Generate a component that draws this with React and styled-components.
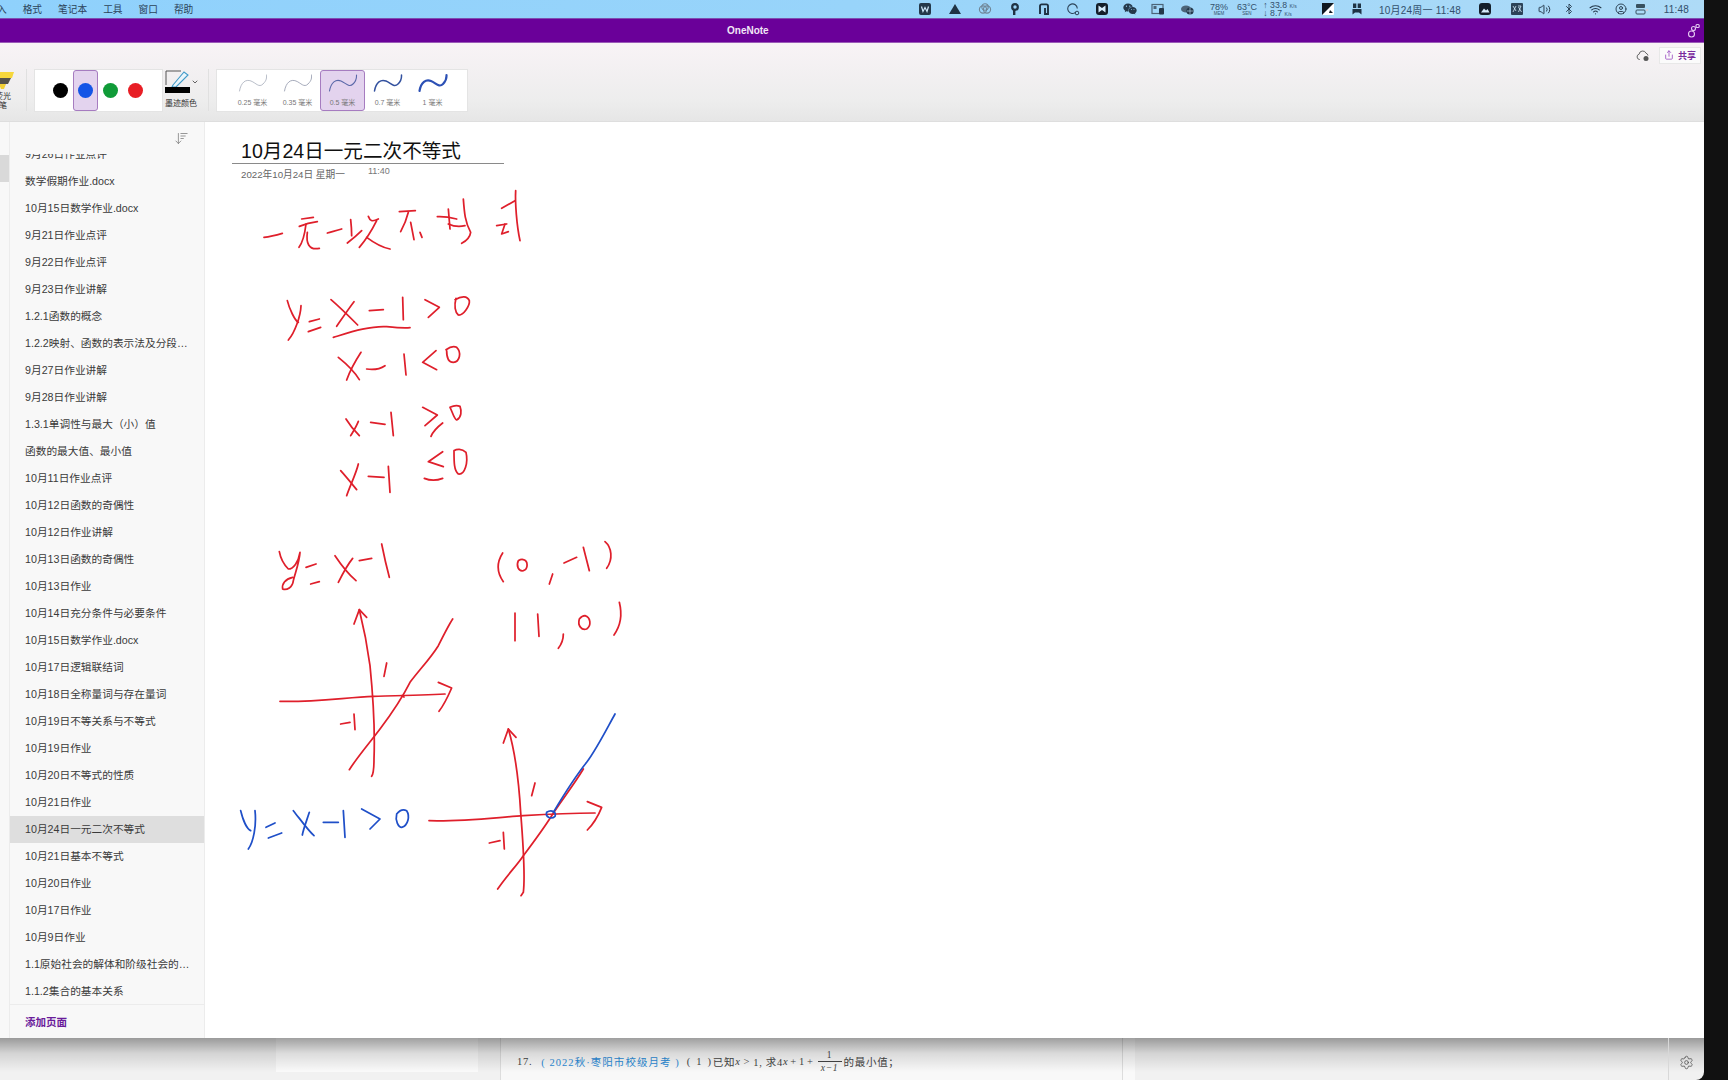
import React from "react";
import styled, { createGlobalStyle } from "styled-components";
import { Volume2, Bluetooth, Wifi, CircleUser, Settings, ArrowDownWideNarrow, Share, ChevronDown } from "lucide-react";
import { FaWeixin } from "react-icons/fa";

const Global = createGlobalStyle`
  html, body { margin: 0; padding: 0; background: #111; }
  * { box-sizing: border-box; }
  body { font-family: "Liberation Sans", "Noto Sans CJK SC", sans-serif; }
`;

const Stage = styled.div`
  width: 1728px; height: 1080px; background: #111; overflow: hidden;
`;
const Screen = styled.div`
  width: 1704px; height: 1080px; display: flex; flex-direction: column;
  border-bottom-right-radius: 8px; overflow: hidden;
`;
const MenuBar = styled.header`
  height: 19px; flex: none; display: flex; align-items: center;
  background: linear-gradient(90deg, #8fd1fc 0%, #98d4fa 50%, #aedbf7 100%);
  border-bottom: 1px solid #7d4fb0;
  color: #2c4358; font-size: 9.7px;
`;
const MenuList = styled.nav`
  display: flex; gap: 16px; margin-left: -3px;
`;
const MenuItem = styled.span`
  white-space: nowrap;
`;
const Status = styled.div`
  margin-left: auto; display: flex; align-items: center; height: 18px;
`;
const Slot = styled.div`
  width: ${p => p.$w}px; margin-left: ${p => p.$ml || 0}px; flex: none;
  display: flex; justify-content: center; align-items: center; color: #24384a;
`;
const Clock = styled.span`
  font-size: 10px; color: #33506b; white-space: nowrap; letter-spacing: .2px;
`;
const Meter = styled.div`
  display: flex; flex-direction: column; align-items: center; line-height: 8px;
  font-size: 9px; color: #33506b;
  small { font-size: 4.5px; line-height: 5px; }
`;
const Net = styled.div`
  display: flex; flex-direction: column; gap: 0; padding-top: 2px; font-size: 8.7px; line-height: 7.5px; color: #33506b; white-space: nowrap;
  small { font-size: 5px; }
`;
const TitleBar = styled.div`
  height: 24px; flex: none; display: flex; align-items: center; justify-content: space-between;
  background: #6a0099; border-bottom: 1px solid #9a5ab8;
  color: #f1e6f6; font-size: 10px; font-weight: 700; padding: 0 4px 0 727px;
`;
const Ribbon = styled.div`
  height: 79px; flex: none; display: flex;
  background: linear-gradient(#f8f3f6, #ededed 75%, #e6e6e6);
  border-bottom: 1px solid #dedede;
`;
const Tools = styled.div`
  display: flex; margin-top: 26px; height: 44px; align-items: flex-start;
`;
const Highlighter = styled.div`
  width: 24px; margin-left: -9px; margin-top: 2px; display: flex; flex-direction: column; align-items: center;
  font-size: 8px; line-height: 9px; color: #333; text-align: center;
  svg { margin-bottom: 3px; }
`;
const Divider = styled.div`
  width: 1px; height: 42px; flex: none; margin: 0 7px 0 ${p => p.$left}px; background: #e0e0e0;
`;
const Panel = styled.div`
  height: 43px; background: #fff; border: 1px solid #e4e4e4; display: flex; padding-left: ${p => p.$pad}px; width: ${p => p.$w}px; flex: none;
`;
const Swatch = styled.div`
  width: 25px; height: 41px; display: flex; align-items: center; justify-content: center; border-radius: 3px;
  ${p => p.$on && "background: #e3d3ee; border: 1px solid #a67cc0;"}
`;
const Dot = styled.div`
  width: 15px; height: 15px; border-radius: 50%; background: ${p => p.$c};
`;
const InkColor = styled.div`
  width: 34px; margin-left: 2px; display: flex; flex-direction: column; align-items: flex-start; position: relative;
  font-size: 8px; color: #333; white-space: nowrap;
  svg.chev { position: absolute; right: 0; top: 9px; }
`;
const InkBar = styled.div`
  width: 25px; height: 6px; background: #000; margin-bottom: 4px;
`;
const PenItem = styled.div`
  width: 45px; height: 41px; display: flex; flex-direction: column; align-items: center; border-radius: 3px; padding-top: 3px;
  font-size: 7px; color: #777; white-space: nowrap;
  svg { margin-bottom: 4px; }
  ${p => p.$on && "background: #e3d3ee; border: 1px solid #a67cc0; padding-top: 2px;"}
`;
const RibbonRight = styled.div`
  margin-left: auto; margin-top: 4px; margin-right: 3px; height: 16px; display: flex; align-items: center; gap: 9px;
`;
const ShareButton = styled.div`
  width: 42px; height: 17px; background: #fbfbfb; border: 1px solid #e8e8e8; display: flex; align-items: center; justify-content: center; gap: 4px;
  color: #7a2a9e; font-size: 9px; font-weight: 700;
`;
const Body = styled.div`
  height: 916px; flex: none; display: flex; background: #fff;
`;
const Sidebar = styled.aside`
  width: 205px; flex: none; display: flex; background: #f8f8f8; border-right: 1px solid #ececec;
`;
const ScrollRail = styled.div`
  width: 10px; flex: none; padding-top: 33px; border-right: 1px solid #ececec;
`;
const ScrollThumb = styled.div`
  height: 27px; background: #d9d9d9;
`;
const PageColumn = styled.div`
  flex: 1; min-width: 0; display: flex; flex-direction: column;
`;
const SortBar = styled.div`
  height: 32px; flex: none; display: flex; justify-content: flex-end; align-items: center; padding-right: 15px; color: #777;
`;
const PageList = styled.div`
  flex: 1; overflow: hidden; min-height: 0;
`;
const PageRows = styled.div`
  margin-top: -13px;
`;
const PageRow = styled.div`
  height: 27px; line-height: 27px; padding: 0 12px 0 15px; font-size: 10.7px; color: #3a3a3a;
  white-space: nowrap; overflow: hidden; text-overflow: ellipsis;
  ${p => p.$on && "background: #dedede;"}
`;
const AddPage = styled.div`
  height: 34px; flex: none; border-top: 1px solid #ececec; padding-left: 15px; line-height: 34px;
  font-size: 10.5px; font-weight: 700; color: #6a1b9a;
`;
const Content = styled.main`
  flex: 1; position: relative; padding: 15px 0 0 27px; background: #fff;
`;
const TitleBlock = styled.div`
  width: 272px; height: 27px; border-bottom: 1px solid #8a8a8a; padding-left: 9px;
  font-size: 19.6px; line-height: 28px; color: #111; white-space: nowrap;
`;
const DateRow = styled.div`
  display: flex; padding-left: 9px; margin-top: 5px; font-size: 9.7px; line-height: 12px; color: #666;
`;
const TimeText = styled.span`
  margin-left: 23px; margin-top: -4px; font-size: 9px; color: #777;
`;
const Ink = styled.svg`
  position: absolute; left: 25px; top: 47px; width: 420px; height: 760px;
  fill: none; stroke-linecap: round; stroke-linejoin: round; stroke-width: 5.2;
`;
const Behind = styled.div`
  flex: 1; position: relative; display: flex; background: #f1f1f1;
  &::after {
    content: ""; position: absolute; left: 0; right: 0; top: 0; height: 34px;
    background: linear-gradient(rgba(0,0,0,.36), rgba(0,0,0,.12) 45%, rgba(0,0,0,0));
  }
`;
const BehindPanel = styled.div`
  width: 202px; height: 34px; margin-left: 276px; background: #fafafa;
`;
const BehindDoc = styled.div`
  width: 623px; margin-left: 22px; background: #f8f8f8; border-left: 1px solid #ddd; border-right: 1px solid #ddd;
  padding: 9px 0 0 16px; display: flex; align-items: flex-start; font-family: "Liberation Serif", "Noto Sans CJK SC", serif;
  font-size: 10.5px; color: #444; white-space: nowrap; height: 42px;
`;
const Gutter = styled.div`
  width: 12px; background: #f9f9f9;
`;
const Line = styled.span`
  display: inline-flex; align-items: center; height: 28px; letter-spacing: .7px;
`;
const Source = styled.span`
  color: #2c8bd6; margin: 0 7px 0 9px; letter-spacing: 1.05px;
`;
const Part = styled.span`
  margin-right: 1px; word-spacing: 2px;
`;
const Op = styled.span`
  margin: 0 ${p => p.$m}px;
`;
const Frac = styled.span`
  display: inline-flex; flex-direction: column; align-items: center; margin: 0 2px; font-style: italic; line-height: 12px; font-size: 9.5px;
  span { display: block; }
  span:first-child { border-bottom: 1px solid #444; padding: 0 3px; min-width: 24px; text-align: center; font-style: normal; }
`;
const GearColumn = styled.div`
  width: 36px; margin-left: auto; border-left: 1px solid #d8d8d8; display: flex; align-items: flex-end; justify-content: center; padding-bottom: 10px; color: #555; position: relative; z-index: 1;
`;

const pages = [
  "9月26日作业点评", "数学假期作业.docx", "10月15日数学作业.docx", "9月21日作业点评", "9月22日作业点评", "9月23日作业讲解",
  "1.2.1函数的概念", "1.2.2映射、函数的表示法及分段函数", "9月27日作业讲解", "9月28日作业讲解", "1.3.1单调性与最大（小）值",
  "函数的最大值、最小值", "10月11日作业点评", "10月12日函数的奇偶性", "10月12日作业讲解", "10月13日函数的奇偶性", "10月13日作业",
  "10月14日充分条件与必要条件", "10月15日数学作业.docx", "10月17日逻辑联结词", "10月18日全称量词与存在量词", "10月19日不等关系与不等式",
  "10月19日作业", "10月20日不等式的性质", "10月21日作业", "10月24日一元二次不等式", "10月21日基本不等式", "10月20日作业", "10月17日作业",
  "10月9日作业", "1.1原始社会的解体和阶级社会的演进", "1.1.2集合的基本关系",
];

const pens = [
  { label: "0.25 毫米", w: 0.7, c: "#9aa0b0" },
  { label: "0.35 毫米", w: 0.8, c: "#8f96aa" },
  { label: "0.5 毫米", w: 1.1, c: "#5a68a8", on: true },
  { label: "0.7 毫米", w: 1.5, c: "#33519f" },
  { label: "1 毫米", w: 2.2, c: "#2c50b5" },
];

const redA = [
  "M102 205C120 203 140 198 157 193", "M215 150L250 145", "M208 172C225 165 245 160 262 158", "M228 165C225 190 218 220 207 235", "M232 190C228 220 235 245 268 238",
  "M292 192C305 188 320 185 335 180", "M362 152C364 170 365 185 365 200", "M352 222C365 212 380 200 395 185", "M415 142C420 155 425 160 445 150", "M440 155C430 175 410 210 388 235", "M410 205C430 220 455 235 480 240",
  "M508 128L556 125", "M535 130C530 150 522 170 512 188", "M542 160L552 212", "M570 190L576 205",
  "M622 143C640 142 660 145 680 150", "M655 120L660 180", "M700 90C703 130 705 160 722 190C720 205 710 215 695 223", "M655 165C670 172 685 175 705 170",
  "M815 118L855 95", "M857 65C855 100 860 170 870 215", "M800 170L830 165", "M825 165L815 195L835 188",
  "M172 395C178 420 195 455 205 460", "M213 410C212 440 195 490 175 513", "M238 458L268 450", "M235 488L272 475",
  "M303 392C330 415 360 445 383 468", "M372 398C355 420 335 450 320 472", "M418 425L460 422", "M518 385L520 452", "M585 392L628 415L595 445",
  "M678 388C672 410 675 430 685 438C700 440 720 410 718 395C712 380 695 380 675 392", "M310 505C360 490 420 470 470 473C500 476 520 478 540 476",
  "M325 565C350 585 375 610 388 632", "M393 550C380 570 362 600 350 633", "M410 600C430 603 450 600 465 590", "M522 555L528 618", "M618 545L578 580L620 602",
  "M650 545C650 565 655 580 670 580C690 578 695 550 680 535C670 530 658 535 648 542",
  "M348 750C360 770 378 790 388 800", "M385 757C378 775 368 790 362 800", "M422 760L465 766", "M483 730L490 800", "M578 715L622 738L585 770", "M638 762C625 772 610 785 603 802",
  "M660 715C668 730 672 750 680 753C695 745 695 725 690 712C680 708 670 710 660 715",
  "M332 905C350 925 370 950 380 962", "M385 885C378 915 360 950 350 980", "M415 922L462 925", "M475 892L480 970", "M638 848L595 878L640 893", "M583 928C600 935 620 935 638 928",
  "M672 845C672 880 672 905 685 915C705 918 715 880 708 850C695 838 680 840 672 845",
];
const redB = [
  "M148 98C152 120 165 140 175 150C190 150 205 130 210 100C208 130 196 160 190 185C188 205 170 215 158 210C155 195 165 180 188 175", "M228 145L258 135", "M242 195L268 188",
  "M315 110C335 140 355 165 378 185", "M368 118C350 140 335 170 325 190", "M388 125L425 118", "M455 75C462 110 470 145 478 175",
  "M818 102C800 130 800 160 820 188", "M865 125C858 140 865 158 880 155C895 150 895 125 880 122C875 120 870 122 865 125", "M968 165L958 195", "M1002 132L1040 115", "M1060 85L1078 155", "M1125 68C1145 85 1150 120 1130 148",
  "M855 282L855 365", "M923 285L927 352", "M1000 345C1000 360 995 375 985 388", "M1048 300C1042 320 1055 335 1070 330C1085 320 1082 295 1065 290C1058 290 1052 295 1048 300", "M1168 250C1178 290 1172 320 1152 348",
  "M388 272C400 320 412 380 420 440C428 520 435 640 432 720C432 750 430 765 425 772", "M372 315L388 272L410 295",
  "M150 547C250 550 350 535 430 532C500 530 580 528 645 525", "M625 490L665 507C655 530 640 560 627 577",
  "M358 752C385 710 420 670 450 630C480 590 510 550 540 490C570 450 600 420 625 380C640 350 655 320 668 300",
  "M470 432L462 472", "M332 615L360 610", "M372 585L375 632", "M515 530L522 534",
  "M835 630C850 680 865 760 872 880C880 980 885 1080 880 1120L873 1130", "M820 672L835 630L858 655",
  "M597 905C700 908 800 895 880 890C960 885 1030 882 1095 882", "M1072 848L1115 865C1105 890 1090 915 1072 933",
  "M803 1110C830 1070 860 1040 880 1010C910 970 940 930 965 890C990 850 1030 800 1060 750",
  "M915 792L905 830", "M778 972L810 965", "M820 940L823 990",
];
const blueB = [
  "M970 880C1000 830 1030 780 1070 730C1100 690 1130 630 1155 585", "M950 880C945 895 965 902 975 892C980 880 965 870 950 880",
  "M32 875C38 900 50 930 62 935", "M75 875C80 920 70 970 55 990", "M108 925L135 912", "M115 957L155 942",
  "M190 875C210 900 235 935 252 950", "M238 880C230 905 220 930 217 948", "M280 910L325 910", "M340 875L345 955", "M395 870L450 900L420 930",
  "M500 885C495 905 505 925 515 925C535 920 540 890 530 875C520 870 508 875 500 885",
];

const Glyph = ({ children, w = 14, h = 14, view = "0 0 14 14" }) => (
  <svg width={w} height={h} viewBox={view}>{children}</svg>
);

export default function App() {
  return (
    <Stage>
      <Global />
      <Screen>
        <MenuBar>
          <MenuList>
            <MenuItem>入</MenuItem><MenuItem>格式</MenuItem><MenuItem>笔记本</MenuItem>
            <MenuItem>工具</MenuItem><MenuItem>窗口</MenuItem><MenuItem>帮助</MenuItem>
          </MenuList>
          <Status>
            <Slot $w={30}><Glyph><rect x="1" y="1" width="12" height="12" rx="2" fill="#24384a" /><path d="M3.5 4.5L5 9.5L7 5.5L9 9.5L10.5 4.5" fill="none" stroke="#cfe8fa" strokeWidth="1.2" /></Glyph></Slot>
            <Slot $w={30}><Glyph><path d="M7 2L13 12H1Z" fill="#1f3344" /></Glyph></Slot>
            <Slot $w={30}><Glyph><g fill="none" stroke="#6f8596" strokeWidth="1.1"><circle cx="5" cy="7.5" r="3.6" /><circle cx="9" cy="7.5" r="3.6" /><circle cx="7" cy="5" r="3.2" /></g></Glyph></Slot>
            <Slot $w={30}><Glyph><circle cx="7" cy="5" r="2.8" fill="none" stroke="#1f3344" strokeWidth="2.2" /><path d="M6.2 7.5V13" stroke="#1f3344" strokeWidth="2.4" /></Glyph></Slot>
            <Slot $w={27}><Glyph><path d="M3 12V4a1.6 1.6 0 0 1 1.6-1.6h4.8A1.6 1.6 0 0 1 11 4V12H8V6" fill="none" stroke="#1f3344" strokeWidth="1.9" /></Glyph></Slot>
            <Slot $w={31}><Glyph><path d="M9.8 10.2A4.8 4.8 0 1 1 11.3 6.5" fill="none" stroke="#2c4358" strokeWidth="1.1" /><circle cx="11" cy="11" r="1.8" fill="none" stroke="#2c4358" /></Glyph></Slot>
            <Slot $w={28}><Glyph><rect x="1" y="1" width="12" height="12" rx="3" fill="#141f2a" /><path d="M3.5 3.5L7 6L10.5 3.5V10.5L7 8L3.5 10.5Z" fill="#d6ecfb" /></Glyph></Slot>
            <Slot $w={27}><FaWeixin size={14} /></Slot>
            <Slot $w={29}><Glyph><rect x="1" y="2.5" width="11" height="9" fill="none" stroke="#4c6478" strokeWidth="1.2" /><rect x="2.5" y="4" width="3" height="3" fill="#4c6478" /><rect x="8" y="6" width="5" height="6.5" rx="1" fill="#24384a" /></Glyph></Slot>
            <Slot $w={30}><Glyph><ellipse cx="6" cy="7" rx="5" ry="3.6" fill="#4c6478" /><circle cx="10" cy="9" r="3.6" fill="#24384a" /><path d="M7 9H13M10 5.6V12.4" stroke="#bfe0f6" strokeWidth=".6" /></Glyph></Slot>
            <Slot $w={34}><Meter><span>78%</span><small>MEM</small></Meter></Slot>
            <Slot $w={22}><Meter><span>63°C</span><small>SEN</small></Meter></Slot>
            <Slot $w={44}><Net><span>↑ 33.8 <small>K/s</small></span><span>↓ 8.7 <small>K/s</small></span></Net></Slot>
            <Slot $w={26} $ml={13}><Glyph><rect x="1" y="1" width="12" height="12" rx="1" fill="#fff" /><path d="M1 1H13L1 13Z" fill="#101820" /><path d="M9 8L12 11H8Z" fill="#101820" /></Glyph></Slot>
            <Slot $w={32}><Glyph><path d="M3 1.5H6.3V6H3ZM7.7 1.5H11V6H7.7ZM2.5 7H11.5V12.5L9 10.5H5L2.5 12.5Z" fill="#1f3344" /></Glyph></Slot>
            <Slot $w={94}><Clock>10月24周一 11:48</Clock></Slot>
            <Slot $w={36}><Glyph><rect x="1" y="1" width="12" height="12" rx="3" fill="#141f2a" /><path d="M3 10.5L6 6.5L8 8.5L9.5 7L11.5 10.5Z" fill="#d6ecfb" /></Glyph></Slot>
            <Slot $w={28}><Glyph><rect x="1" y="1" width="12" height="12" rx="1" fill="#2c4358" /><path d="M3 4L6 9M6 4L3 10M8 4H11L8.5 10M8.5 5L11.5 10" fill="none" stroke="#d6ecfb" strokeWidth=".8" /></Glyph></Slot>
            <Slot $w={26}><Volume2 size={13} strokeWidth={1.8} /></Slot>
            <Slot $w={24}><Bluetooth size={12} strokeWidth={1.8} /></Slot>
            <Slot $w={28}><Wifi size={13} strokeWidth={2} /></Slot>
            <Slot $w={24}><CircleUser size={12} strokeWidth={1.8} /></Slot>
            <Slot $w={16}><Glyph><rect x="2" y="2" width="9" height="4" rx="1" fill="#38505f" /><rect x="2" y="8" width="9" height="4" rx="1" fill="none" stroke="#38505f" /><circle cx="13" cy="8" r="1" fill="#dcc8cf" /></Glyph></Slot>
            <Slot $w={55}><Clock>11:48</Clock></Slot>
          </Status>
        </MenuBar>

        <TitleBar>
          <span>OneNote</span>
          <Glyph w={13} h={16} view="0 0 13 16">
            <g fill="none" stroke="#e3c8f0" strokeWidth="1.1"><circle cx="4.5" cy="11" r="3" /><circle cx="6.5" cy="5.5" r="2" /><rect x="9" y="1.5" width="3.2" height="3" rx="1" /></g>
          </Glyph>
        </TitleBar>

        <Ribbon>
          <Tools>
            <Highlighter>
              <Glyph w={24} h={18} view="0 0 24 18">
                <path d="M0 1H23L21 7H2Z" fill="#f6d73c" /><path d="M3 7H20L17 13H6Z" fill="#55524a" /><path d="M8 13H15L13 18H10Z" fill="#f1cf35" />
              </Glyph>
              <span>荧光</span><span>笔</span>
            </Highlighter>
            <Divider $left={11} />
            <Panel $w={129} $pad={13}>
              <Swatch><Dot $c="#000" /></Swatch>
              <Swatch $on><Dot $c="#1455e6" /></Swatch>
              <Swatch><Dot $c="#109b38" /></Swatch>
              <Swatch><Dot $c="#e81e25" /></Swatch>
            </Panel>
            <InkColor>
              <Glyph w={24} h={18} view="0 0 24 18">
                <path d="M1 16V2H16" fill="none" stroke="#555" strokeWidth="1" />
                <path d="M8 16L19 3L23 6L11 18L7 18Z" fill="#eaf5fb" stroke="#3f9ac9" strokeWidth="1.1" />
              </Glyph>
              <InkBar />
              <span>墨迹颜色</span>
              <ChevronDown className="chev" size={8} strokeWidth={2.5} color="#444" />
            </InkColor>
            <Divider $left={9} />
            <Panel $w={252} $pad={13}>
              {pens.map(p => (
                <PenItem key={p.label} $on={p.on}>
                  <Glyph w={30} h={20} view="0 0 30 20">
                    <path d="M1.5 18C3 9 8 6 13 8S21 15 25 11S28.5 5 28.5 2" fill="none" stroke={p.c} strokeWidth={p.w} strokeLinecap="round" />
                  </Glyph>
                  <span>{p.label}</span>
                </PenItem>
              ))}
            </Panel>
          </Tools>
          <RibbonRight>
            <Glyph w={14} h={14}>
              <path d="M4 11.5H3.5a2.7 2.7 0 0 1-.4-5.3A3.6 3.6 0 0 1 10 5.2a3 3 0 0 1 2 2.3" fill="none" stroke="#666" strokeWidth="1" />
              <circle cx="10" cy="10.5" r="2.5" fill="#555" />
            </Glyph>
            <ShareButton><Share size={10} color="#9a4fc0" />共享</ShareButton>
          </RibbonRight>
        </Ribbon>

        <Body>
          <Sidebar>
            <ScrollRail><ScrollThumb /></ScrollRail>
            <PageColumn>
              <SortBar><ArrowDownWideNarrow size={15} strokeWidth={1.2} /></SortBar>
              <PageList>
                <PageRows>
                  {pages.map((t, i) => <PageRow key={i} $on={t === "10月24日一元二次不等式"}>{t}</PageRow>)}
                </PageRows>
              </PageList>
              <AddPage>添加页面</AddPage>
            </PageColumn>
          </Sidebar>
          <Content>
            <TitleBlock>10月24日一元二次不等式</TitleBlock>
            <DateRow><span>2022年10月24日 星期一</span><TimeText>11:40</TimeText></DateRow>
            <Ink viewBox="0 0 1260 2280">
              <g stroke="#df1f2b">{redA.map((d, i) => <path key={i} d={d} />)}</g>
              <g stroke="#df1f2b" transform="translate(0 1050)">{redB.map((d, i) => <path key={i} d={d} />)}</g>
              <g stroke="#1f4fc8" transform="translate(0 1050)">{blueB.map((d, i) => <path key={i} d={d} />)}</g>
            </Ink>
          </Content>
        </Body>

        <Behind>
          <BehindPanel />
          <BehindDoc>
            <Line>
              17.<Source>( 2022秋·枣阳市校级月考 )</Source><Part>( 1 )</Part>已知<i>x</i><Op $m={3}>&gt;</Op>1, 求4<i>x</i><Op $m={2}>+</Op>1<Op $m={2}>+</Op>
              <Frac><span>1</span><span>x−1</span></Frac>的最小值；
            </Line>
          </BehindDoc>
          <Gutter />
          <GearColumn><Settings size={15} strokeWidth={1.3} /></GearColumn>
        </Behind>
      </Screen>
    </Stage>
  );
}
